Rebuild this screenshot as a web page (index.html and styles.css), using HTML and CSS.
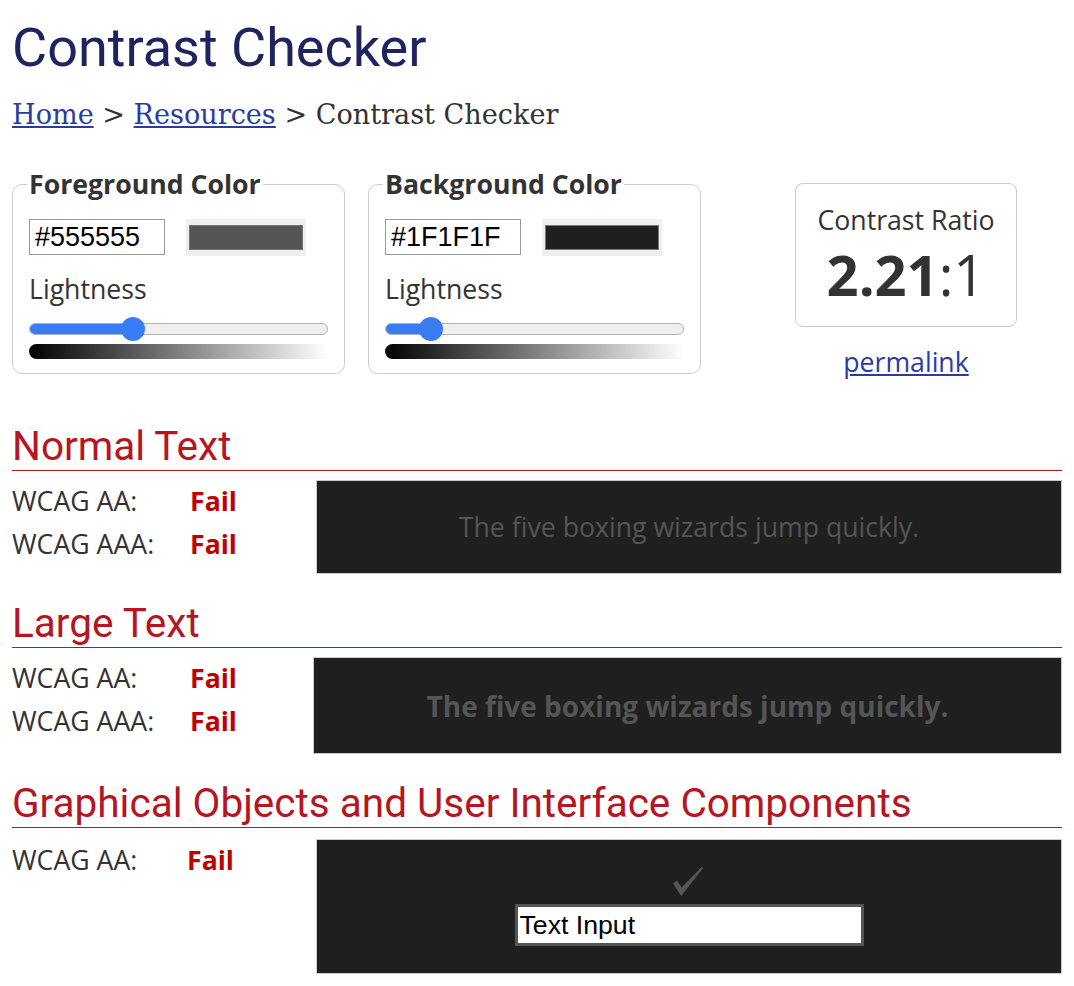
FILE: index.html
```html
<!DOCTYPE html>
<html>
<head>
  <title>Contrast Checker</title>
  <meta charset="UTF-8">
  <link rel="stylesheet" href="styles.css">
</head>
<body>
  <div id="page">
    <h1 class="title">Contrast Checker</h1>
    <div class="crumbs"><a href="#">Home</a> &gt; <a href="#">Resources</a> &gt; Contrast Checker</div>

    <div class="pickers">
      <fieldset class="picker">
        <legend>Foreground Color</legend>
        <div class="pickRow">
          <input class="hexInput" type="text" value="#555555">
          <span class="swatch"><span class="swatchFill" style="background-color: #555555;"></span></span>
        </div>
        <div class="lightLabel">Lightness</div>
        <div class="slider">
          <div class="sliderTrack"><div class="sliderFill" style="width: 104px;"></div></div>
          <div class="sliderThumb" style="left: 92px;"></div>
        </div>
        <div class="lightBar"></div>
      </fieldset>

      <fieldset class="picker">
        <legend>Background Color</legend>
        <div class="pickRow">
          <input class="hexInput" type="text" value="#1F1F1F">
          <span class="swatch"><span class="swatchFill" style="background-color: #1f1f1f;"></span></span>
        </div>
        <div class="lightLabel">Lightness</div>
        <div class="slider">
          <div class="sliderTrack"><div class="sliderFill" style="width: 46px;"></div></div>
          <div class="sliderThumb" style="left: 34px;"></div>
        </div>
        <div class="lightBar"></div>
      </fieldset>

      <div class="ratioCol">
        <div class="ratioBox">
          <div class="ratioLabel">Contrast Ratio</div>
          <div class="ratioValue"><b>2.21</b>:1</div>
        </div>
        <a class="permalink" href="#">permalink</a>
      </div>
    </div>

    <h2 class="sectionHead">Normal Text</h2>
    <div class="result">
      <div class="verdicts">
        <div class="verdict"><span class="level">WCAG AA:</span><span class="fail">Fail</span></div>
        <div class="verdict"><span class="level">WCAG AAA:</span><span class="fail">Fail</span></div>
      </div>
      <div class="sample">The five boxing wizards jump quickly.</div>
    </div>

    <h2 class="sectionHead">Large Text</h2>
    <div class="result resultLarge">
      <div class="verdicts">
        <div class="verdict"><span class="level">WCAG AA:</span><span class="fail">Fail</span></div>
        <div class="verdict"><span class="level">WCAG AAA:</span><span class="fail">Fail</span></div>
      </div>
      <div class="sample sampleLarge">The five boxing wizards jump quickly.</div>
    </div>

    <h2 class="sectionHead">Graphical Objects and User Interface Components</h2>
    <div class="result resultUi">
      <div class="verdicts">
        <div class="verdict"><span class="level">WCAG AA:</span><span class="fail">Fail</span></div>
      </div>
      <div class="sample sampleUi">
        <svg class="checkMark" width="30" height="29" viewBox="0 0 30 29"><path d="M0 16.5 L4 13.5 L8.6 20.5 L28.6 0 L30 1.2 L8.2 29 Z" fill="#555555"/></svg>
        <input class="uiInput" type="text" value="Text Input">
      </div>
    </div>
  </div>
</body>
</html>
```

FILE: styles.css
```css
body {
  margin: 0;
  padding: 0;
  background: #ffffff;
  color: #333333;
  font-family: "Open Sans", Arial, sans-serif;
  font-size: 26.67px;
  line-height: 1.6;
}
#page {
  padding: 0 12px;
}
.title {
  margin: 16px 0 0 0;
  font-family: Roboto, Arial, sans-serif;
  font-weight: normal;
  font-size: 54px;
  line-height: 64px;
  color: #1e2460;
}
.crumbs {
  margin-top: 13px;
  font-family: "DejaVu Serif", "Liberation Serif", serif;
  font-size: 27.1px;
  line-height: 43px;
  color: #333333;
}
.crumbs a {
  color: #2b3ca0;
}

/* colour pickers */
.pickers {
  display: flex;
  align-items: flex-start;
  margin-top: 27px;
}
.picker {
  width: 333px;
  box-sizing: border-box;
  margin: 0 23px 0 0;
  padding: 13px 16px 14px 16px;
  border: 1px solid #cccccc;
  border-radius: 10px;
}
.picker legend {
  padding: 0 2px;
  margin-left: -2px;
  font-weight: bold;
  font-size: 26.67px;
  line-height: 42.67px;
  color: #333333;
}
.pickRow {
  display: flex;
  align-items: center;
}
.hexInput {
  width: 136px;
  height: 36px;
  box-sizing: border-box;
  margin: 0;
  padding: 0 5px;
  border: 1px solid #999999;
  font-family: "Liberation Sans", Arial, sans-serif;
  font-size: 27px;
  color: #000000;
}
.swatch {
  display: block;
  margin-left: 21px;
  padding: 6px 3px;
  background: #efefef;
}
.swatchFill {
  display: block;
  width: 112px;
  height: 23px;
  border: 1px solid #777777;
}
.lightLabel {
  margin-top: 11px;
  line-height: 43px;
  color: #333333;
}
.slider {
  position: relative;
  height: 24px;
  margin-top: 7px;
}
.sliderTrack {
  position: relative;
  top: 6px;
  height: 12px;
  box-sizing: border-box;
  border: 1px solid #b2b2b2;
  border-radius: 6px;
  background: #efefef;
  overflow: hidden;
}
.sliderFill {
  height: 12px;
  margin: -1px 0 0 -1px;
  background: #3a7cf5;
}
.sliderThumb {
  position: absolute;
  top: 0;
  width: 24px;
  height: 24px;
  border-radius: 12px;
  background: #3a7cf5;
}
.lightBar {
  height: 15px;
  margin-top: 3px;
  border-radius: 8px 0 0 8px;
  background: linear-gradient(to right, #000000, #ffffff);
}

/* ratio */
.ratioCol {
  margin-left: 71px;
  margin-top: 20px;
  width: 222px;
  text-align: center;
}
.ratioBox {
  padding: 14px 0 18px 0;
  border: 1px solid #cccccc;
  border-radius: 8px;
}
.ratioLabel {
  line-height: 43px;
}
.ratioValue {
  font-size: 56px;
  line-height: 67px;
  color: #333333;
}
.permalink {
  display: block;
  margin-top: 13px;
  line-height: 43px;
  color: #2b3ca0;
}

/* results */
.sectionHead {
  margin: 39px 0 0 0;
  font-family: Roboto, Arial, sans-serif;
  font-weight: normal;
  font-size: 40.5px;
  line-height: 48px;
  color: #b5161f;
  border-bottom: 1px solid #b5161f;
}
.result + .sectionHead {
  margin-top: 25px;
}
.result {
  display: grid;
  grid-template-columns: 304px 1fr;
  margin-top: 9px;
}
.resultLarge {
  grid-template-columns: 301px 1fr;
}
.resultUi {
  margin-top: 11px;
}
.verdict {
  display: flex;
}
.level {
  width: 178px;
}
.resultUi .level {
  width: 175px;
}
.fail {
  font-weight: bold;
  color: #c00000;
}
.sample {
  padding: 24px 0 25px 0;
  border: 1px solid #cccccc;
  background: #1f1f1f;
  color: #555555;
  line-height: 43px;
  text-align: center;
}
.sampleLarge {
  padding: 26px 0 25px 0;
  font-weight: bold;
  font-size: 28px;
  line-height: 44px;
}
.sampleUi {
  padding: 27px 0;
}
.checkMark {
  display: block;
  margin: 0 auto;
  position: relative;
  left: -1px;
}
.uiInput {
  display: block;
  width: 349px;
  height: 42px;
  box-sizing: border-box;
  margin: 8px auto 0 auto;
  padding: 0 2px;
  border: 3px solid #555555;
  background: #ffffff;
  font-family: "Liberation Sans", Arial, sans-serif;
  font-size: 26.67px;
  color: #000000;
}
```
